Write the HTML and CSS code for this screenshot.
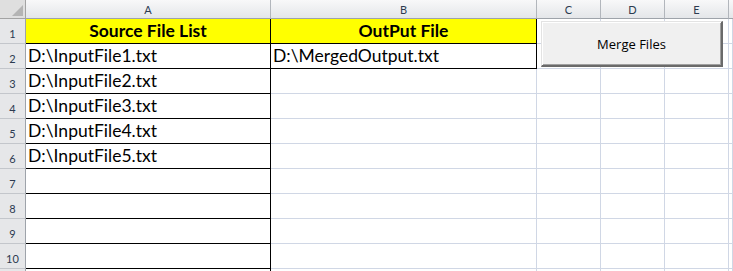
FILE: index.html
```html
<!DOCTYPE html>
<html>
<head>
<meta charset="utf-8">
<link rel="stylesheet" href="styles.css">
</head>
<body>
<div class="sheet">
  <div class="grid">
    <div class="corner"><span class="tri"></span></div>
    <div class="ch">A</div>
    <div class="ch">B</div>
    <div class="ch">C</div>
    <div class="ch">D</div>
    <div class="ch">E</div>
    <div class="ch ch-last"></div>

    <div class="rh">1</div>
    <div class="c bx hd">Source File List</div>
    <div class="c bx hd">OutPut File</div>
    <div class="c"></div><div class="c"></div><div class="c"></div><div class="c"></div>

    <div class="rh">2</div>
    <div class="c bx">D:\InputFile1.txt</div>
    <div class="c bx">D:\MergedOutput.txt</div>
    <div class="c"></div><div class="c"></div><div class="c"></div><div class="c"></div>

    <div class="rh">3</div>
    <div class="c bx">D:\InputFile2.txt</div>
    <div class="c"></div><div class="c"></div><div class="c"></div><div class="c"></div><div class="c"></div>

    <div class="rh">4</div>
    <div class="c bx">D:\InputFile3.txt</div>
    <div class="c"></div><div class="c"></div><div class="c"></div><div class="c"></div><div class="c"></div>

    <div class="rh">5</div>
    <div class="c bx">D:\InputFile4.txt</div>
    <div class="c"></div><div class="c"></div><div class="c"></div><div class="c"></div><div class="c"></div>

    <div class="rh">6</div>
    <div class="c bx">D:\InputFile5.txt</div>
    <div class="c"></div><div class="c"></div><div class="c"></div><div class="c"></div><div class="c"></div>

    <div class="rh">7</div>
    <div class="c bx"></div>
    <div class="c"></div><div class="c"></div><div class="c"></div><div class="c"></div><div class="c"></div>

    <div class="rh">8</div>
    <div class="c bx"></div>
    <div class="c"></div><div class="c"></div><div class="c"></div><div class="c"></div><div class="c"></div>

    <div class="rh">9</div>
    <div class="c bx"></div>
    <div class="c"></div><div class="c"></div><div class="c"></div><div class="c"></div><div class="c"></div>

    <div class="rh">10</div>
    <div class="c bx"></div>
    <div class="c"></div><div class="c"></div><div class="c"></div><div class="c"></div><div class="c"></div>

    <div class="rh"></div>
    <div class="c bx"></div>
    <div class="c"></div><div class="c"></div><div class="c"></div><div class="c"></div><div class="c"></div>
  </div>
  <button class="merge-btn" type="button">Merge Files</button>
</div>
</body>
</html>
```

FILE: styles.css
```css
html, body {
  margin: 0;
  padding: 0;
  background: #ffffff;
  overflow: hidden;
}

.sheet {
  position: relative;
  width: 733px;
  height: 271px;
  overflow: hidden;
}

.grid {
  display: grid;
  grid-template-columns: 26px 245px 266px 64px 64px 64px 1fr;
  grid-template-rows: 19px repeat(11, 25px);
  font-family: Lato, "Liberation Sans", sans-serif;
}

.grid > div {
  box-sizing: border-box;
  min-width: 0;
  overflow: hidden;
  white-space: nowrap;
}

.corner {
  background: #dfdfdf;
  border-right: 1px solid #a3a3a3;
  border-bottom: 1px solid #a3a3a3;
  display: flex;
  align-items: flex-end;
  justify-content: flex-end;
  padding: 0 2px 2px 0;
}

.tri {
  display: block;
  width: 11px;
  height: 11px;
  background: #b4b4b4;
  clip-path: polygon(100% 0, 100% 100%, 0 100%);
}

.ch {
  background: linear-gradient(#f8f8f9, #e4e6e9);
  border-right: 1px solid #b2b6bc;
  border-bottom: 1px solid #9ea3aa;
  color: #2c3a50;
  font-size: 11px;
  line-height: 18px;
  padding-top: 1px;
  text-align: center;
}

.ch-last {
  border-right: none;
}

.rh {
  background: #e6e7e9;
  border-right: 1px solid #9ea3aa;
  border-bottom: 1px solid #c3c6cb;
  color: #2c3a50;
  font-size: 11px;
  line-height: 13px;
  display: flex;
  align-items: flex-end;
  justify-content: center;
  padding-bottom: 3px;
}

.c {
  border-right: 1px solid #d0d7e5;
  border-bottom: 1px solid #d0d7e5;
  font-size: 17.5px;
  line-height: 24px;
  color: #000000;
  padding-left: 2px;
}

.c.bx {
  border-right-color: #000000;
  border-bottom-color: #000000;
}

.c.hd {
  background: #ffff00;
  font-weight: 700;
  text-align: center;
  padding-left: 0;
}

.merge-btn {
  position: absolute;
  left: 541px;
  top: 21px;
  width: 182px;
  height: 46px;
  margin: 0;
  padding: 0;
  background: #f0f0f0;
  border-style: solid;
  border-width: 1px 2px 2px 1px;
  border-color: #e3e3e3 #6a6a6a #6a6a6a #e3e3e3;
  box-shadow: inset 1px 1px 0 #ffffff, inset -1px -1px 0 #a0a0a0;
  font-family: "Open Sans", "Noto Sans", sans-serif;
  font-size: 13px;
  color: #000000;
  text-align: center;
}
```
